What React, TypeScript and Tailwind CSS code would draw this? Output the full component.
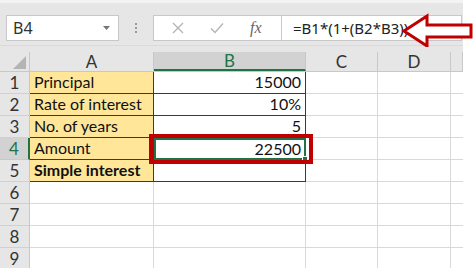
import React from "react";

const cols = [
  { key: "A", w: 124 },
  { key: "B", w: 152 },
  { key: "C", w: 72 },
  { key: "D", w: 73 },
  { key: "E", w: 12 },
];

const rows: { a: string; b: string; bold?: boolean }[] = [
  { a: "Principal", b: "15000" },
  { a: "Rate of interest", b: "10%" },
  { a: "No. of years", b: "5" },
  { a: "Amount", b: "22500" },
  { a: "Simple interest", b: "", bold: true },
  { a: "", b: "" },
  { a: "", b: "" },
  { a: "", b: "" },
  { a: "", b: "" },
];

const cellFont = { fontFamily: "Lato, 'Liberation Sans', sans-serif" };

export default function App() {
  return (
    <div className="relative w-[474px] h-[268px] overflow-hidden bg-white" style={cellFont}>
      <div className="w-[463px]">
        {/* --- formula bar --- */}
        <div className="h-[52px] bg-[#e6e6e6] border-t-[3px] border-[#f3f3f3] relative">
          <div className="flex items-start pt-[12px] pl-[6px]">
            <div className="w-[113px] h-[26px] bg-white border border-[#c8c8c8] flex items-center justify-between pl-[6px] pr-[8px]">
              <span className="text-[16px] text-[#333]" style={{ fontFamily: "'Noto Sans', sans-serif" }}>B4</span>
              <svg width="7" height="4" viewBox="0 0 7 4"><path d="M0 0h7L3.5 4z" fill="#777" /></svg>
            </div>
            <div className="w-[34px] h-[26px] flex flex-col items-center justify-center gap-[2px]">
              <span className="w-[2px] h-[2px] bg-[#999]" />
              <span className="w-[2px] h-[2px] bg-[#999]" />
              <span className="w-[2px] h-[2px] bg-[#999]" />
            </div>
            <div className="w-[124px] h-[26px] bg-white border border-[#c8c8c8] border-r-0 flex items-center">
              <svg className="ml-[18px]" width="12" height="12" viewBox="0 0 12 12">
                <path d="M1 1l10 10M11 1L1 11" stroke="#b5b5b5" strokeWidth="1.4" />
              </svg>
              <svg className="ml-[26px]" width="14" height="12" viewBox="0 0 14 12">
                <path d="M1 6.5l4 4L13 1.5" stroke="#b5b5b5" strokeWidth="1.4" fill="none" />
              </svg>
              <span className="ml-[26px] text-[16px] italic text-[#666]" style={{ fontFamily: "'Liberation Serif', serif" }}>fx</span>
            </div>
            <div className="w-[4px] h-[26px] bg-white border-y border-[#c8c8c8]" />
            <div className="w-[181px] h-[26px] bg-white border border-[#c8c8c8] flex items-center pl-[11px]">
              <span className="text-[15px] text-[#222]" style={{ fontFamily: "'Noto Sans', sans-serif" }}>=B1*(1+(B2*B3))</span>
            </div>
          </div>
          <div className="absolute left-0 right-0 bottom-[6px] h-px bg-[#dadada]" />
        </div>

        {/* --- column headers --- */}
        <div className="flex h-[20px] bg-[#e6e6e6] border-b border-[#c8c8c8]">
          <div className="w-[30px] border-r border-[#c8c8c8] flex items-end justify-end pr-[3px] pb-[2px]">
            <svg width="13" height="13" viewBox="0 0 13 13"><path d="M13 0v13H0z" fill="#b4b4b4" /></svg>
          </div>
          {cols.map((c) => (
            <div
              key={c.key}
              style={{ width: c.w }}
              className={
                c.key === "B"
                  ? "bg-[#d2d2d2] border-r border-[#c8c8c8] border-b-2 border-b-[#217346] text-[#217346] text-[17px] flex items-center justify-center leading-none"
                  : "border-r border-[#c8c8c8] text-[#333] text-[17px] flex items-center justify-center leading-none"
              }
            >
              {c.key === "E" ? "" : c.key}
            </div>
          ))}
        </div>

        {/* --- rows --- */}
        {rows.map((r, i) => {
          const n = i + 1;
          const filled = n <= 5;
          const sel = n === 4;
          return (
            <div key={n} className="flex h-[22px]">
              <div
                className={
                  sel
                    ? "w-[30px] bg-[#d2d2d2] border-r-2 border-[#217346] border-b border-b-[#c8c8c8] text-[#217346] text-[17px] flex items-center justify-center"
                    : "w-[30px] bg-[#e6e6e6] border-r border-[#c8c8c8] border-b border-b-[#d0d0d0] text-[#333] text-[17px] flex items-center justify-center"
                }
              >
                {n}
              </div>
              <div
                className={
                  filled
                    ? "w-[124px] bg-[#ffe699] border-r border-b border-[#3a3a3a] flex items-end pl-[4px] pb-[1px] text-[16px] text-[#111] leading-[20px]"
                    : "w-[124px] border-r border-b border-[#d9d9d9]"
                }
              >
                <span className={r.bold ? "font-bold" : ""}>{r.a}</span>
              </div>
              <div
                className={
                  sel
                    ? "relative w-[152px] border-2 border-[#217346] flex items-end justify-end pr-[3px] text-[16px] text-[#111] leading-[19px]"
                    : filled
                    ? "w-[152px] border-r border-b border-[#3a3a3a] flex items-end justify-end pr-[4px] pb-[1px] text-[16px] text-[#111] leading-[20px]"
                    : "w-[152px] border-r border-b border-[#d9d9d9]"
                }
              >
                {r.b}
                {sel && <span className="absolute right-[-4px] bottom-[-4px] w-[6px] h-[6px] bg-[#217346] border border-white" />}
              </div>
              <div className="w-[72px] border-r border-b border-[#d9d9d9]" />
              <div className="w-[73px] border-r border-b border-[#d9d9d9]" />
              <div className="w-[12px] border-b border-[#d9d9d9]" />
            </div>
          );
        })}
      </div>

      {/* --- annotations --- */}
      <div className="absolute left-[149px] top-[134px] w-[164px] h-[30px] border-[4px] border-[#c00000]" />
      <svg className="absolute left-[400px] top-[13px]" width="74" height="34" viewBox="0 0 74 34">
        <path d="M4 18L27 3V12H71V24H27V33Z" fill="white" stroke="#c00000" strokeWidth="3" strokeLinejoin="miter" />
      </svg>
    </div>
  );
}
